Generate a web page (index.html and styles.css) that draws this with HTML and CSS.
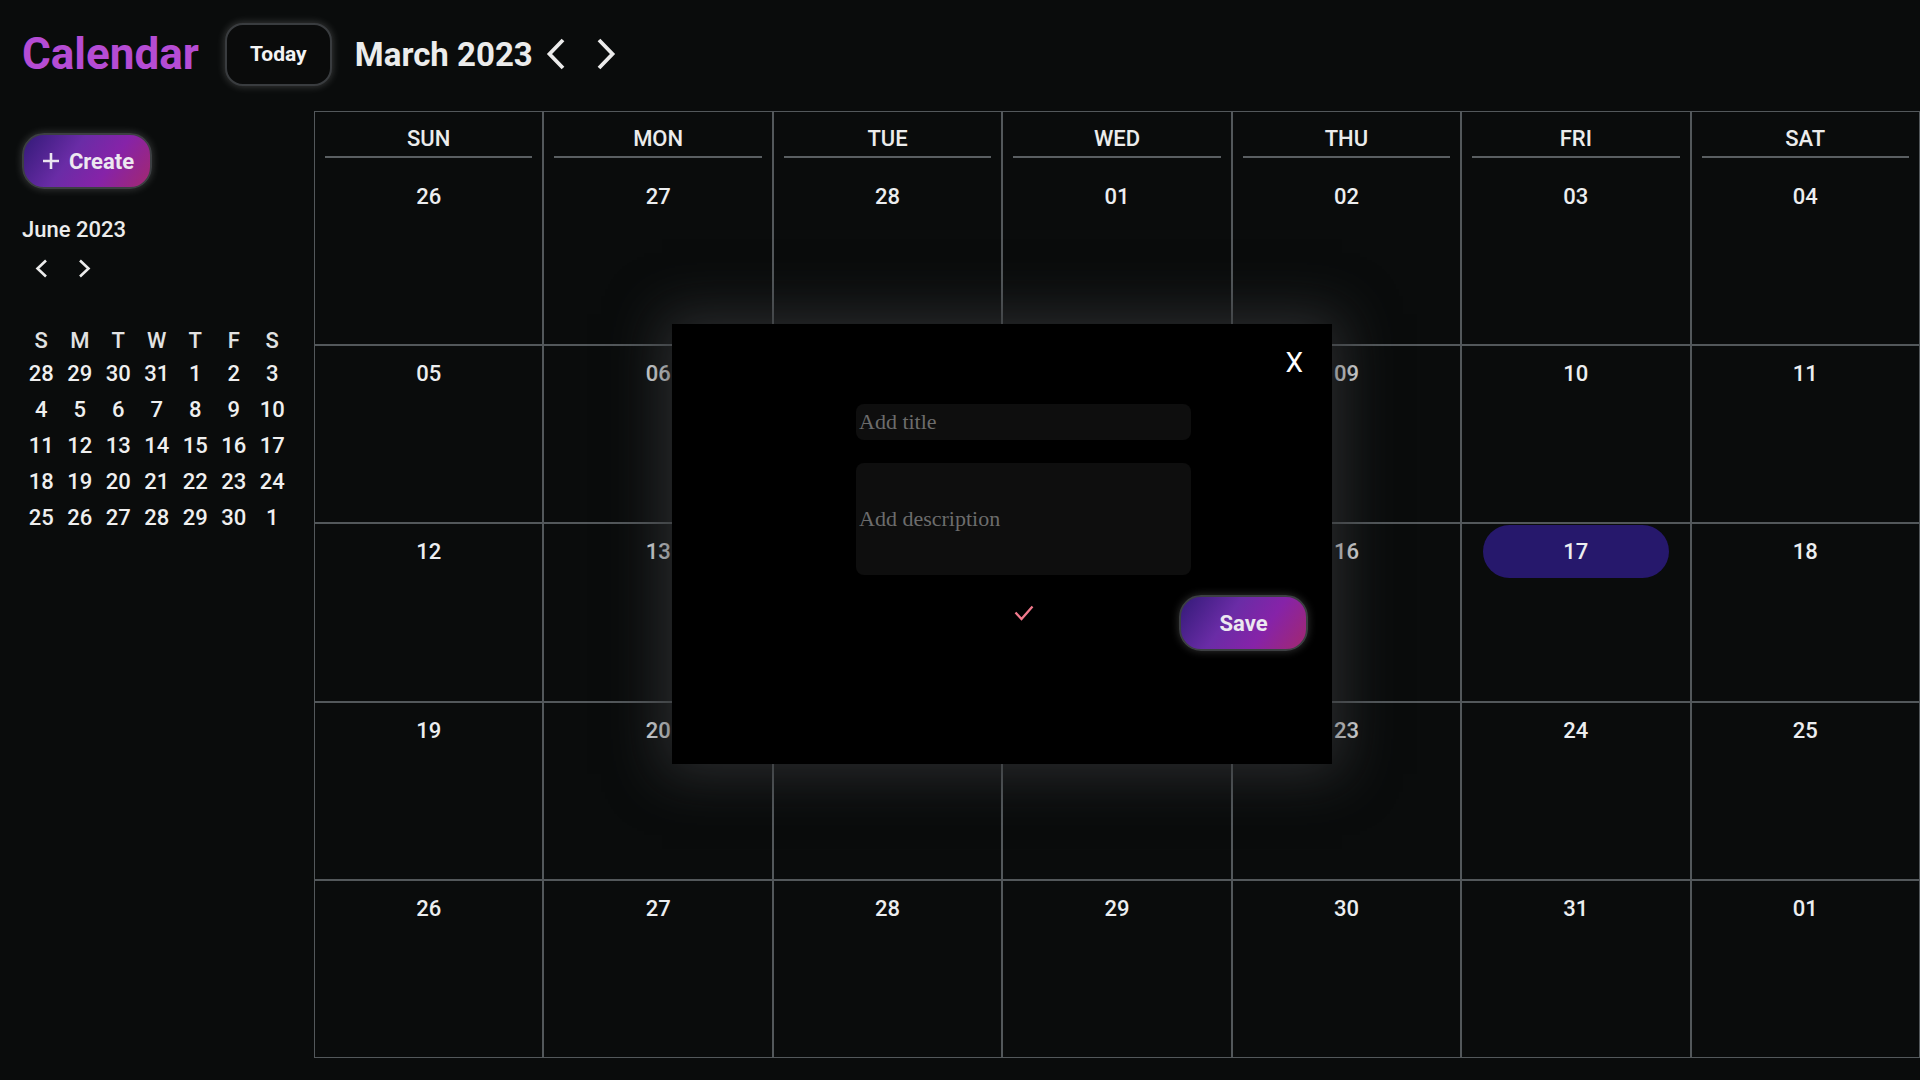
FILE: index.html
```html
<!DOCTYPE html>
<html lang="en">
<head>
<meta charset="utf-8">
<title>Calendar</title>
<link rel="stylesheet" href="styles.css">
</head>
<body>
<header class="topbar">
  <h1 class="brand">Calendar</h1>
  <button class="today-btn">Today</button>
  <h2 class="month-title">March 2023</h2>
  <button class="nav-btn nav-prev" aria-label="Previous month">
    <svg width="20" height="32" viewBox="0 0 20 32"><polyline points="17,2 3.5,16 17,30" fill="none" stroke="#ececec" stroke-width="3.8"/></svg>
  </button>
  <button class="nav-btn nav-next" aria-label="Next month">
    <svg width="20" height="32" viewBox="0 0 20 32"><polyline points="3,2 16.5,16 3,30" fill="none" stroke="#ececec" stroke-width="3.8"/></svg>
  </button>
</header>

<div class="main">
  <aside class="sidebar">
    <button class="grad-btn create-btn">
      <svg width="18" height="18" viewBox="0 0 18 18"><path d="M9 1v16M1 9h16" stroke="#ebe6f0" stroke-width="2.6" fill="none"/></svg>
      <span>Create</span>
    </button>
    <div class="mini-title">June 2023</div>
    <div class="mini-nav">
      <svg width="13" height="19" viewBox="0 0 13 19"><polyline points="11,1.5 2.5,9.5 11,17.5" fill="none" stroke="#ececec" stroke-width="2.6"/></svg>
      <svg width="13" height="19" viewBox="0 0 13 19"><polyline points="2,1.5 10.5,9.5 2,17.5" fill="none" stroke="#ececec" stroke-width="2.6"/></svg>
    </div>
    <div class="mini-cal">
      <div class="mini-head">S</div><div class="mini-head">M</div><div class="mini-head">T</div><div class="mini-head">W</div><div class="mini-head">T</div><div class="mini-head">F</div><div class="mini-head">S</div>
      <div>28</div><div>29</div><div>30</div><div>31</div><div>1</div><div>2</div><div>3</div>
      <div>4</div><div>5</div><div>6</div><div>7</div><div>8</div><div>9</div><div>10</div>
      <div>11</div><div>12</div><div>13</div><div>14</div><div>15</div><div>16</div><div>17</div>
      <div>18</div><div>19</div><div>20</div><div>21</div><div>22</div><div>23</div><div>24</div>
      <div>25</div><div>26</div><div>27</div><div>28</div><div>29</div><div>30</div><div>1</div>
    </div>
  </aside>

  <section class="month-grid">
    <div class="cell"><div class="dow">SUN</div><div class="num">26</div></div>
    <div class="cell"><div class="dow">MON</div><div class="num">27</div></div>
    <div class="cell"><div class="dow">TUE</div><div class="num">28</div></div>
    <div class="cell"><div class="dow">WED</div><div class="num">01</div></div>
    <div class="cell"><div class="dow">THU</div><div class="num">02</div></div>
    <div class="cell"><div class="dow">FRI</div><div class="num">03</div></div>
    <div class="cell"><div class="dow">SAT</div><div class="num">04</div></div>

    <div class="cell"><div class="num">05</div></div>
    <div class="cell"><div class="num">06</div></div>
    <div class="cell"><div class="num">07</div></div>
    <div class="cell"><div class="num">08</div></div>
    <div class="cell"><div class="num">09</div></div>
    <div class="cell"><div class="num">10</div></div>
    <div class="cell"><div class="num">11</div></div>

    <div class="cell"><div class="num">12</div></div>
    <div class="cell"><div class="num">13</div></div>
    <div class="cell"><div class="num">14</div></div>
    <div class="cell"><div class="num">15</div></div>
    <div class="cell"><div class="num">16</div></div>
    <div class="cell"><div class="num today">17</div></div>
    <div class="cell"><div class="num">18</div></div>

    <div class="cell"><div class="num">19</div></div>
    <div class="cell"><div class="num">20</div></div>
    <div class="cell"><div class="num">21</div></div>
    <div class="cell"><div class="num">22</div></div>
    <div class="cell"><div class="num">23</div></div>
    <div class="cell"><div class="num">24</div></div>
    <div class="cell"><div class="num">25</div></div>

    <div class="cell"><div class="num">26</div></div>
    <div class="cell"><div class="num">27</div></div>
    <div class="cell"><div class="num">28</div></div>
    <div class="cell"><div class="num">29</div></div>
    <div class="cell"><div class="num">30</div></div>
    <div class="cell"><div class="num">31</div></div>
    <div class="cell"><div class="num">01</div></div>
  </section>
</div>

<div class="modal">
  <div class="modal-top"><button class="close-btn">X</button></div>
  <input class="field title-field" type="text" placeholder="Add title">
  <input class="field desc-field" type="text" placeholder="Add description">
  <div class="modal-actions">
    <button class="check-btn" aria-label="Done">
      <svg width="20" height="16" viewBox="0 0 20 16"><polyline points="1.5,7.5 7.5,14 18.5,1.5" fill="none" stroke="#f27a8d" stroke-width="2.3"/></svg>
    </button>
    <button class="grad-btn save-btn">Save</button>
  </div>
</div>
</body>
</html>
```

FILE: styles.css
```css
* { box-sizing: border-box; }

html, body {
  margin: 0;
  padding: 0;
}

body {
  width: 1920px;
  height: 1080px;
  overflow: hidden;
  position: relative;
  background: #0a0c0c;
  color: #ececec;
  font-family: Roboto, "Noto Sans", sans-serif;
}

button {
  font-family: inherit;
  cursor: pointer;
}

/* ---------- top bar ---------- */
.topbar {
  height: 111px;
  padding: 0 0 3px 22px;
  display: flex;
  align-items: center;
}

.brand {
  margin: 0 26px 0 0;
  font-size: 44px;
  font-weight: 700;
  color: #b54cd4;
  letter-spacing: 0;
}

.today-btn {
  width: 107px;
  height: 63px;
  margin-right: 23px;
  border: 2px solid #393c3f;
  border-radius: 18px;
  background: #0a0b0b;
  color: #f4f4f4;
  font-size: 21px;
  font-weight: 700;
  box-shadow: 0 0 9px rgba(255, 255, 255, 0.22);
}

.month-title {
  margin: 0;
  font-size: 33px;
  font-weight: 700;
  color: #ececec;
}

.nav-btn {
  background: none;
  border: none;
  padding: 0;
  display: flex;
  align-items: center;
}

.nav-prev { margin-left: 13px; }
.nav-next { margin-left: 30px; }

/* ---------- main ---------- */
.main {
  display: flex;
}

.sidebar {
  width: 314px;
  flex: 0 0 314px;
  padding: 22px 0 0 22px;
}

.grad-btn {
  border: 2px solid #3c3f42;
  border-radius: 22px;
  background: linear-gradient(125deg, #331a78 0%, #6a2ca6 38%, #8623a8 66%, #a3286f 100%);
  color: #ece8f0;
  font-size: 22px;
  font-weight: 700;
  box-shadow: 0 0 9px rgba(255, 255, 255, 0.2);
  display: flex;
  align-items: center;
  justify-content: center;
}

.create-btn {
  width: 130px;
  height: 56px;
  gap: 9px;
  padding: 0 0 0 2px;
}

.mini-title {
  margin-top: 28px;
  font-size: 22px;
  line-height: 26px;
  font-weight: 500;
  color: #ececec;
}

.mini-nav {
  margin-top: 13px;
  height: 24px;
  padding-left: 13px;
  display: flex;
  align-items: center;
  gap: 30px;
}

.mini-cal {
  margin-top: 45px;
  display: grid;
  grid-template-columns: repeat(7, 38.5px);
  grid-template-rows: 30px repeat(5, 36px);
  font-size: 22px;
  font-weight: 500;
  color: #efefef;
}

.mini-cal > div {
  display: flex;
  align-items: center;
  justify-content: center;
}

.mini-head {
  font-weight: 500;
  color: #e2e2e2;
}

/* ---------- month grid ---------- */
.month-grid {
  width: 1606px;
  height: 947px;
  display: grid;
  grid-template-columns: repeat(7, 1fr);
  grid-template-rows: 234px repeat(4, 1fr);
}

.cell {
  border: 1px solid #53585b;
  display: flex;
  flex-direction: column;
  min-width: 0;
}

.dow {
  margin: 0 10px 11px;
  padding-top: 10px;
  line-height: 34px;
  border-bottom: 2px solid #5a5f62;
  text-align: center;
  font-size: 22px;
  font-weight: 500;
  color: #ececec;
}

.num {
  margin: 1px 21px 0;
  height: 53px;
  line-height: 53px;
  border-radius: 27px;
  text-align: center;
  font-size: 22px;
  font-weight: 500;
  color: #eceef0;
}

.num.today {
  background: #26186c;
}

/* ---------- modal ---------- */
.modal {
  position: absolute;
  left: 672px;
  top: 324px;
  width: 660px;
  height: 440px;
  padding: 25px 29px 0 184px;
  background: #000;
  box-shadow: 0 0 50px 10px rgba(50, 51, 54, 0.8);
}

.modal-top {
  height: 28px;
  display: flex;
  justify-content: flex-end;
}

.close-btn {
  background: none;
  border: none;
  padding: 0;
  color: #fff;
  font-size: 28px;
  line-height: 28px;
  font-weight: 400;
}

.field {
  display: block;
  width: 335px;
  border: none;
  outline: none;
  border-radius: 8px;
  background: #0e0e0e;
  color: #ddd;
  padding: 0 3px;
  font-family: "Liberation Serif", "Times New Roman", serif;
  font-size: 22px;
}

.field::placeholder {
  color: #6c6c6c;
}

.title-field {
  margin-top: 27px;
  height: 36px;
}

.desc-field {
  margin-top: 23px;
  height: 112px;
}

.modal-actions {
  margin-top: 20px;
  width: 452px;
  display: flex;
  align-items: flex-start;
}

.check-btn {
  margin-left: 150px;
  width: 36px;
  height: 36px;
  padding: 0;
  border: none;
  background: none;
  display: flex;
  align-items: center;
  justify-content: center;
}

.save-btn {
  margin-left: auto;
  width: 129px;
  height: 56px;
}
```
